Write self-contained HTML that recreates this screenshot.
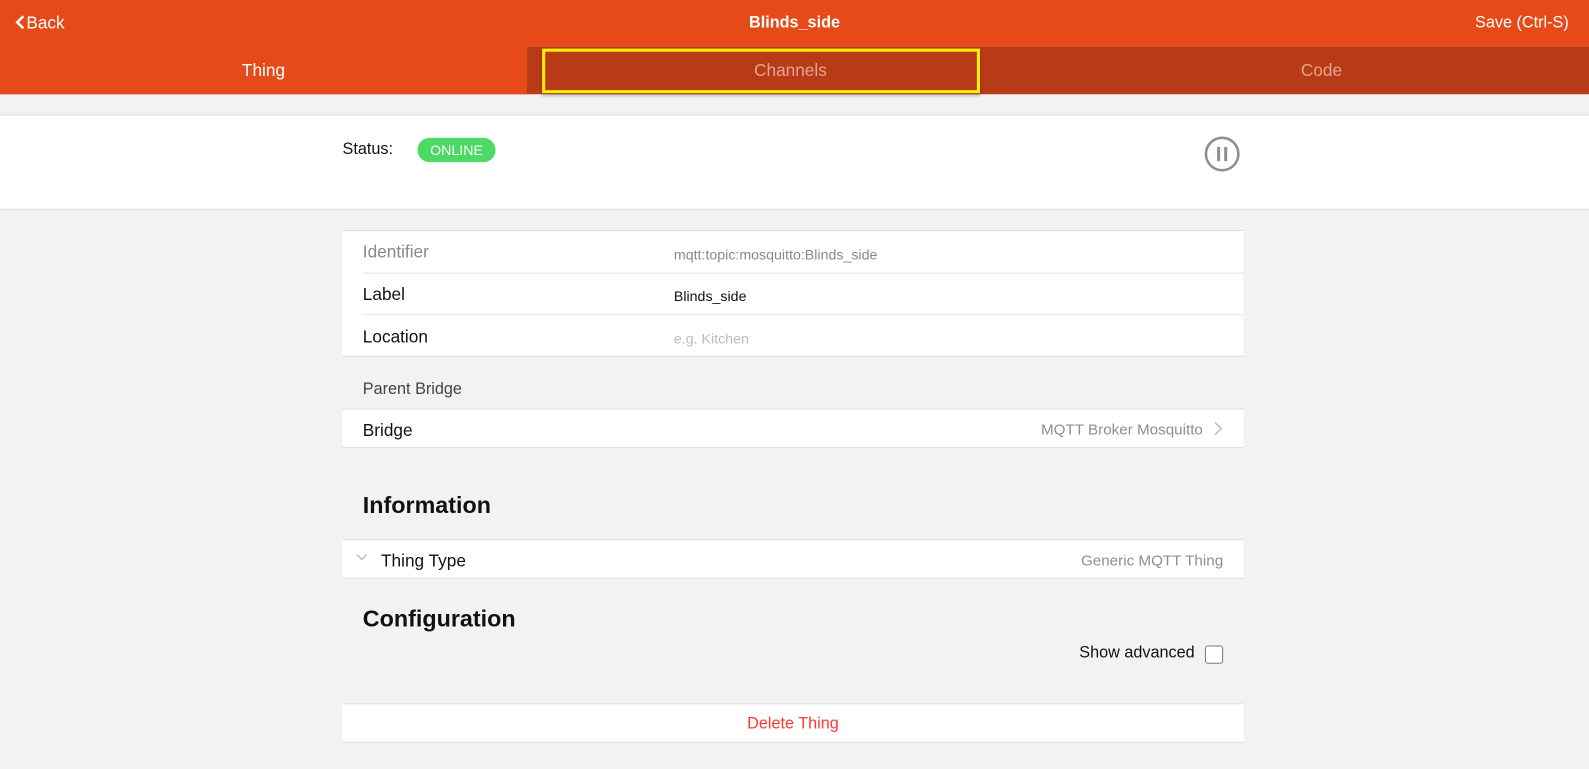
<!DOCTYPE html>
<html><head><meta charset="utf-8"><style>
*{margin:0;padding:0;box-sizing:border-box}
html,body{width:1589px;height:769px;overflow:hidden;background:#f2f2f2}
#w{position:absolute;left:0;top:0;width:1568px;height:759px;transform:scale(1.01339);transform-origin:0 0;font-family:"Liberation Sans",sans-serif}
.a{position:absolute}
.hdr{left:0;top:0;width:1568px;height:46px;background:#e64a19;color:#fff;font-size:17px}
.tabs{left:0;top:46px;width:1568px;height:47px;background:#b93a16}
.t{position:absolute;top:0;height:47px;line-height:47px;text-align:center;font-size:17px}
.row{position:absolute;left:338px;width:889px;background:#fff}
.lab{position:absolute;left:20px;font-size:17px;color:#111}
.val{position:absolute;left:327px;font-size:14px}
</style></head><body><div id="w">
<div class="a hdr">
  <div class="a" style="left:14px;top:13px;font-size:17px">
    <svg width="12" height="16" viewBox="0 0 12 16" style="vertical-align:-2px"><path d="M9 2 L3 8 L9 14" stroke="#fff" stroke-width="2.5" fill="none"/></svg>Back</div>
  <div class="a" style="left:0;width:1568px;text-align:center;top:14px;font-weight:bold;font-size:16px">Blinds_side</div>
  <div class="a" style="right:20px;top:14px;font-size:16px">Save (Ctrl-S)</div>
</div>
<div class="a tabs">
  <div class="t" style="left:0;width:520px;background:#e64a19;color:#fff">Thing</div>
  <div class="t" style="left:520px;width:520px;color:#e5a58f">Channels</div>
  <div class="t" style="left:1040px;width:528px;color:#e5a58f">Code</div>
  <div class="a" style="left:535px;top:2px;width:432px;height:44px;border:3px solid #fff200;box-shadow:0 2px 3px rgba(0,0,0,.3)"></div>
</div>
<div class="a" style="left:0;top:113px;width:1568px;height:94px;background:#fff;border-top:1px solid #ddd;border-bottom:1px solid #ddd"></div>
<div class="a" style="left:338px;top:139px;font-size:16px;color:#111">Status:</div>
<div class="a" style="left:412px;top:136px;width:77px;height:24px;border-radius:12px;background:#4cd964;color:#fff;font-size:14px;line-height:24px;text-align:center">ONLINE</div>
<svg class="a" style="left:1188px;top:134px" width="36" height="36" viewBox="0 0 36 36"><circle cx="18" cy="18" r="16" stroke="#8e8e93" stroke-width="2.5" fill="none"/><rect x="13" y="11" width="3" height="14" fill="#8e8e93"/><rect x="20" y="11" width="3" height="14" fill="#8e8e93"/></svg>

<div class="row" style="top:227px;height:125px;border-top:1px solid #ddd;border-bottom:1px solid #ddd">
  <div class="lab" style="top:11px;color:#888">Identifier</div><div class="val" style="top:15px;color:#888">mqtt:topic:mosquitto:Blinds_side</div>
  <div class="a" style="left:20px;right:0;top:41px;border-top:1px solid #e5e5e5"></div>
  <div class="lab" style="top:53px">Label</div><div class="val" style="top:56px;color:#111">Blinds_side</div>
  <div class="a" style="left:20px;right:0;top:82px;border-top:1px solid #e5e5e5"></div>
  <div class="lab" style="top:95px">Location</div><div class="val" style="top:98px;color:#bbb">e.g. Kitchen</div>
</div>
<div class="a" style="left:358px;top:376px;font-size:16px;color:#444">Parent Bridge</div>
<div class="row" style="top:403px;height:39px;border-top:1px solid #ddd;border-bottom:1px solid #ddd">
  <div class="lab" style="top:11px">Bridge</div>
  <div class="a" style="right:40px;top:12px;font-size:15px;color:#8e8e93">MQTT Broker Mosquitto</div>
  <svg class="a" style="right:20px;top:12px" width="10" height="14" viewBox="0 0 10 14"><path d="M2 1 L8 7 L2 13" stroke="#bbb" stroke-width="1.5" fill="none"/></svg>
</div>
<div class="a" style="left:358px;top:485px;font-size:23px;font-weight:bold;color:#111">Information</div>
<div class="row" style="top:532px;height:39px;border-top:1px solid #ddd;border-bottom:1px solid #ddd">
  <svg class="a" style="left:13px;top:13px" width="12" height="8" viewBox="0 0 12 8"><path d="M1 1 L6 6 L11 1" stroke="#bbb" stroke-width="1.3" fill="none"/></svg>
  <div class="lab" style="left:38px;top:11px">Thing Type</div>
  <div class="a" style="right:20px;top:12px;font-size:15px;color:#8e8e93">Generic MQTT Thing</div>
</div>
<div class="a" style="left:358px;top:597px;font-size:23px;font-weight:bold;color:#111">Configuration</div>
<div class="a" style="left:1065px;top:636px;font-size:16px;color:#111">Show advanced</div>
<div class="a" style="left:1189px;top:637px;width:18px;height:18px;border:1px solid #777;border-radius:3px;background:#fff"></div>
<div class="row" style="top:694px;height:39px;border-top:1px solid #ddd;border-bottom:1px solid #ddd;text-align:center;line-height:39px;color:#ff3b30;font-size:16px">Delete Thing</div>
</div></body></html>
